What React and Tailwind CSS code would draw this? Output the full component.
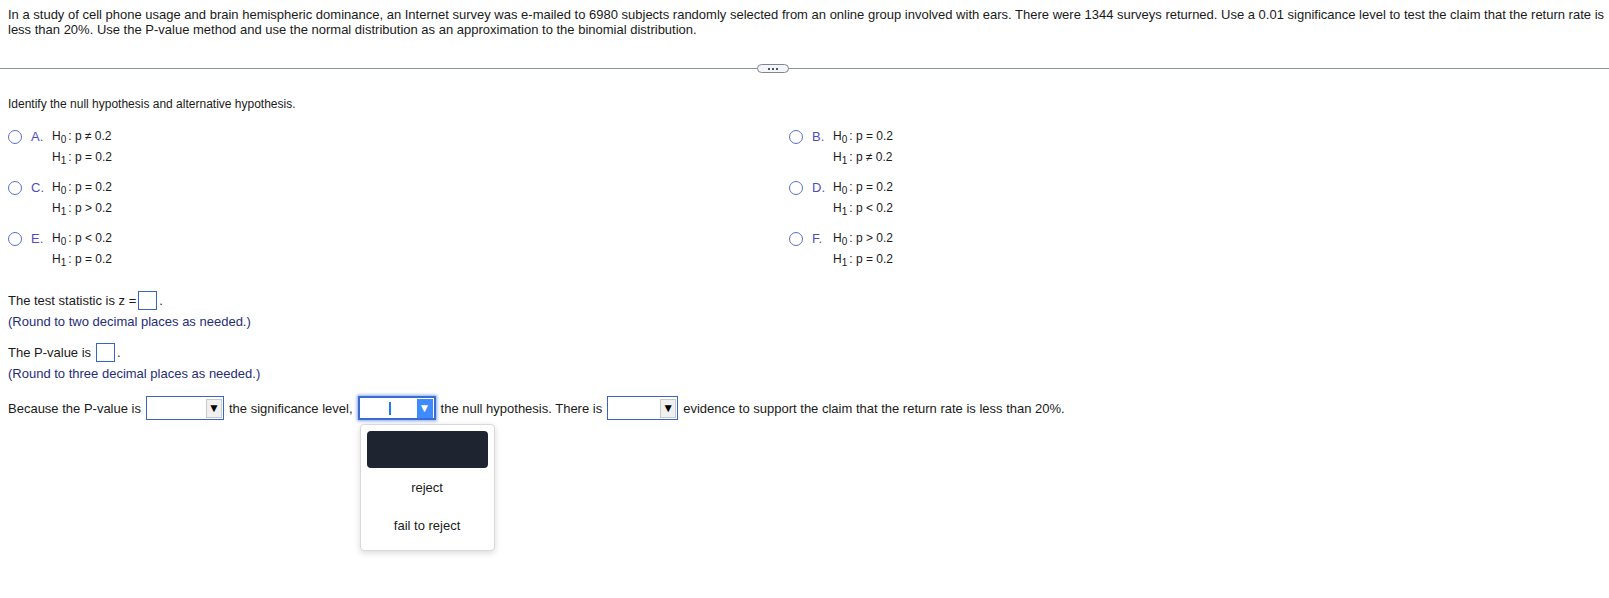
import { useState } from 'react'

const options = [
  { key: 'A', h0: 'p \u2260 0.2', h1: 'p = 0.2' },
  { key: 'B', h0: 'p = 0.2', h1: 'p \u2260 0.2' },
  { key: 'C', h0: 'p = 0.2', h1: 'p > 0.2' },
  { key: 'D', h0: 'p = 0.2', h1: 'p < 0.2' },
  { key: 'E', h0: 'p < 0.2', h1: 'p = 0.2' },
  { key: 'F', h0: 'p > 0.2', h1: 'p = 0.2' },
]

function Hyp({ sub, text }) {
  return (
    <div className="flex h-[21px] items-center">
      <span>
        H<sub className="relative top-[3px] text-[10px]">{sub}</sub>
      </span>
      <span className="ml-[2px]">: {text}</span>
    </div>
  )
}

function Option({ opt }) {
  return (
    <div className="flex">
      <div className="flex h-[21px] items-center">
        <span className="h-[14px] w-[14px] rounded-full border border-[#5a6fd4]" />
        <span className="ml-[9px] w-[21px] text-[13px] text-[#4f4cc0]">{opt.key}.</span>
      </div>
      <div>
        <Hyp sub="0" text={opt.h0} />
        <Hyp sub="1" text={opt.h1} />
      </div>
    </div>
  )
}

function AnswerBox() {
  return <span className="mx-[2px] inline-block h-[19px] w-[19px] border border-[#3a63c9] align-middle" />
}

function Select({ width, focused, children }) {
  return (
    <span
      className={`relative mx-[5px] inline-flex h-[24px] items-center justify-end align-middle ${width} ${
        focused ? 'border-2 border-[#3b6bd6] shadow-[0_0_3px_1px_rgba(59,107,214,0.6)]' : 'border border-[#3a63c9]'
      }`}
    >
      {focused && <span className="absolute left-[29px] top-[4px] h-[13px] w-[2px] bg-[#1f7cf0]" />}
      <span
        className={`mr-[1px] flex h-[19px] w-[16px] items-center justify-center border text-[12px] leading-none ${
          focused ? 'border-[#3d8bff] bg-[#3d8bff] text-white' : 'border-[#c9c9c9] bg-[#f0f0f0] text-black'
        }`}
      >
        {'\u25BC'}
      </span>
      {children}
    </span>
  )
}

export default function App() {
  const [open] = useState(true)

  return (
    <div className="min-h-[598px] bg-white text-[13px] leading-[15px] text-[#1a1a1a]" style={{ fontFamily: '"Liberation Sans", Arial, sans-serif' }}>
      <div className="px-[8px] pt-[7px] whitespace-nowrap">
        <p>
          In a study of cell phone usage and brain hemispheric dominance, an Internet survey was e-mailed to 6980 subjects randomly selected from an online group involved with ears. There were 1344 surveys returned. Use a 0.01 significance level to test the claim that the return rate is
        </p>
        <p>less than 20%. Use the P-value method and use the normal distribution as an approximation to the binomial distribution.</p>
      </div>

      <div className="relative mt-[31px] h-[1px] bg-[#8a93a3]">
        <span className="absolute left-[757px] top-[-4px] flex h-[9px] w-[32px] items-center justify-center gap-[2px] rounded-full border border-[#7d8696] bg-[#f4f5f7]">
          <span className="h-[2px] w-[2px] bg-[#4b5563]" />
          <span className="h-[2px] w-[2px] bg-[#4b5563]" />
          <span className="h-[2px] w-[2px] bg-[#4b5563]" />
        </span>
      </div>

      <div className="px-[8px]">
        <p className="mt-[28px] text-[12px]">Identify the null hypothesis and alternative hypothesis.</p>

        <div className="mt-[14px] flex text-[12px]">
          <div className="flex w-[781px] flex-col gap-[9px]">
            {options.filter((_, i) => i % 2 === 0).map((opt) => (
              <Option key={opt.key} opt={opt} />
            ))}
          </div>
          <div className="flex flex-col gap-[9px]">
            {options.filter((_, i) => i % 2 === 1).map((opt) => (
              <Option key={opt.key} opt={opt} />
            ))}
          </div>
        </div>

        <div className="mt-[20px] flex h-[21px] items-center">
          The test statistic is z =<AnswerBox />.
        </div>
        <div className="flex h-[20px] items-center text-[#1f2d7a]">(Round to two decimal places as needed.)</div>

        <div className="mt-[11px] flex h-[21px] items-center">
          The P-value is<span className="ml-[3px]" />
          <AnswerBox />.
        </div>
        <div className="flex h-[20px] items-center text-[#1f2d7a]">(Round to three decimal places as needed.)</div>

        <div className="mt-[12px] flex h-[26px] items-center">
          <span>Because the P-value is</span>
          <Select width="w-[78px]" />
          <span>the significance level,</span>
          <Select width="w-[78px]" focused>
            {open && (
              <div className="absolute left-[0px] top-[26px] z-10 w-[135px] rounded-[4px] border border-[#d9d9d9] bg-white px-[6px] pb-[6px] pt-[6px] shadow-[0_2px_6px_rgba(0,0,0,0.15)]">
                <div className="h-[37px] rounded-[4px] bg-[#1e2430]" />
                <div className="flex h-[38px] items-center justify-center">reject</div>
                <div className="flex h-[38px] items-center justify-center">fail to reject</div>
              </div>
            )}
          </Select>
          <span>the null hypothesis. There is</span>
          <Select width="w-[71px]" />
          <span>evidence to support the claim that the return rate is less than 20%.</span>
        </div>
      </div>
    </div>
  )
}
